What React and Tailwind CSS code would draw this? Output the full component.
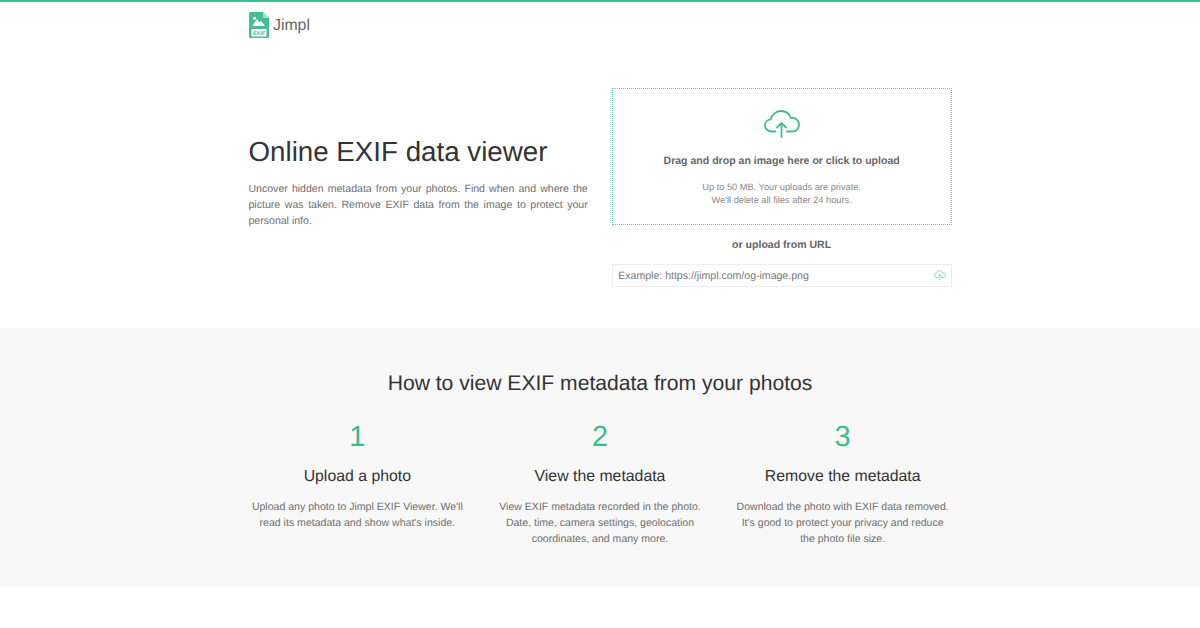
import React from 'react';

function CloudUp({ className }) {
  return (
    <svg viewBox="0 0 36 28" fill="none" stroke="currentColor" strokeWidth="1.8" strokeLinecap="round" strokeLinejoin="round" className={className}>
      <path d="M11.5 21.5H7.5C3.9 21.5 1 18.8 1 15.4C1 12.2 3.5 9.7 6.7 9.4C7.7 4.6 11.9 1 17 1C21.6 1 25.5 3.9 26.9 8C27.3 8 27.8 7.9 28.2 7.9C32 7.9 35 10.9 35 14.7C35 18.5 32 21.5 28.2 21.5H23" />
      <path d="M17.5 27V13M13 17.5L17.5 13L22 17.5" />
    </svg>
  );
}

function Logo() {
  return (
    <svg viewBox="0 0 20 26" className="w-5 h-[26px]">
      <path d="M1.5 0H14L20 6V24.5C20 25.3 19.3 26 18.5 26H1.5C.7 26 0 25.3 0 24.5V1.5C0 .7.7 0 1.5 0Z" fill="#45bd95" />
      <path d="M14 0L20 6H15C14.4 6 14 5.6 14 5Z" fill="#a5e0cb" />
      <path d="M3.5 14L8 7L10.5 10.5L12 9L16 14Z" fill="#fff" />
      <circle cx="5.5" cy="6.5" r="1.4" fill="#fff" />
      <rect x="2.5" y="17" width="15" height="7.5" rx="0.5" fill="#fff" />
      <text x="10" y="23" textAnchor="middle" fontSize="5.4" fontWeight="700" fontStyle="italic" fill="#45bd95" fontFamily="Liberation Sans, sans-serif">EXIF</text>
    </svg>
  );
}

function Step({ num, title, children }) {
  return (
    <div className="px-3 text-center">
      <div className="text-[29px] leading-9 text-[#3dbb93]">{num}</div>
      <h3 className="mt-[7px] text-[15.84px] leading-[30px] text-[#333]">{title}</h3>
      <p className="mt-[7px] text-[10.56px] leading-4 text-[#6e6e6e]">{children}</p>
    </div>
  );
}

export default function App() {
  return (
    <div className="min-h-[628px] bg-white border-t-2 border-[#36c596] font-['Liberation_Sans',Arial,sans-serif] [text-rendering:geometricPrecision]">
      <header className="w-[728px] mx-auto px-[13px] pt-[10px] h-[50px]">
        <a className="flex items-start gap-1">
          <Logo />
          <span className="mt-[1px] text-[15.84px] leading-[26px] text-[#666]">Jimpl</span>
        </a>
      </header>

      <section className="w-[728px] mx-auto px-[12.5px] pt-[36px] h-[276px] flex gap-6">
        <div className="w-[339.5px] pt-[46px]">
          <h1 className="text-[27.72px] leading-9 text-[#333]">Online EXIF data viewer</h1>
          <p className="mt-[11px] text-[10.56px] leading-4 text-[#6e6e6e] text-justify">
            Uncover hidden metadata from your photos. Find when and where the picture was taken. Remove EXIF data from the image to protect your personal info.
          </p>
        </div>
        <div className="w-[340px]">
          <div className="h-[136.5px] border border-dotted border-[#5fd0ad] flex flex-col items-center pt-[21px]">
            <CloudUp className="w-9 h-7 text-[#3dbb93]" />
            <div className="mt-[13px] text-[10.56px] leading-5 font-bold text-[#666]">Drag and drop an image here or click to upload</div>
            <div className="mt-[9.5px] text-[9.24px] leading-[13px] text-[#888] text-center">
              Up to 50 MB. Your uploads are private.<br />We'll delete all files after 24 hours.
            </div>
          </div>
          <div className="mt-[10.5px] text-[10.56px] leading-5 font-bold text-[#666] text-center">or upload from URL</div>
          <div className="mt-[8.5px] h-[23px] border border-[#eee] flex items-center justify-between pl-[5.5px] pr-[5px]">
            <span className="mt-[3px] text-[10.56px] text-[#777]">Example: https://jimpl.com/og-image.png</span>
            <CloudUp className="w-3 h-[10px] text-[#3dbb93]" />
          </div>
        </div>
      </section>

      <section className="bg-[#f8f8f8] h-[259px] pt-[41px]">
        <h2 className="text-center text-[21.12px] leading-[30px] text-[#333]">How to view EXIF metadata from your photos</h2>
        <div className="w-[728px] mx-auto grid grid-cols-3 mt-[20px]">
          <Step num="1" title="Upload a photo">Upload any photo to Jimpl EXIF Viewer. We'll read its metadata and show what's inside.</Step>
          <Step num="2" title="View the metadata">View EXIF metadata recorded in the photo. Date, time, camera settings, geolocation coordinates, and many more.</Step>
          <Step num="3" title="Remove the metadata">Download the photo with EXIF data removed. It's good to protect your privacy and reduce the photo file size.</Step>
        </div>
      </section>
    </div>
  );
}
